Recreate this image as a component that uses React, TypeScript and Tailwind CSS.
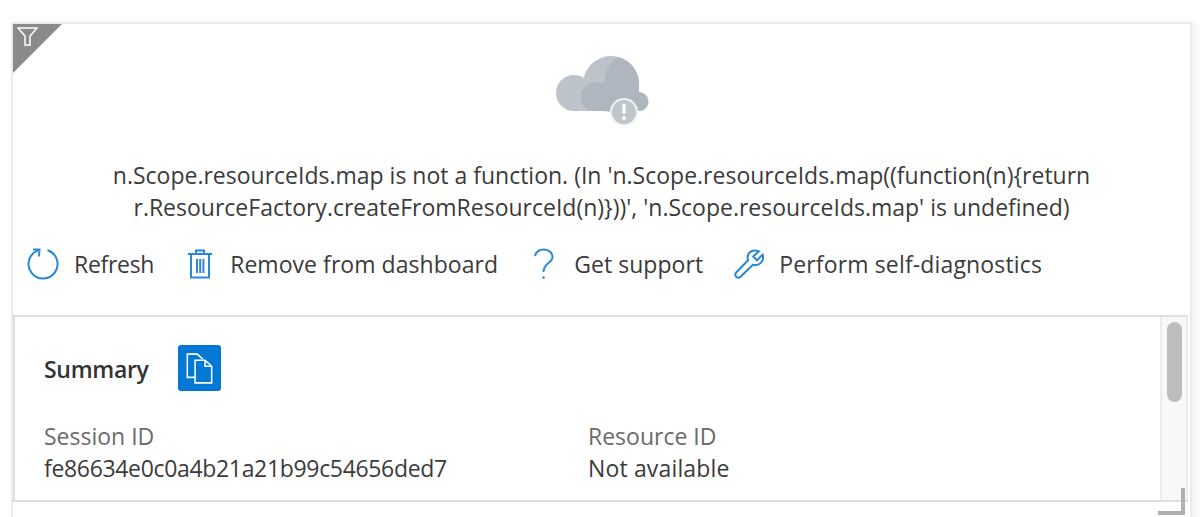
import React from "react";

const CloudIcon = () => (
  <svg width="96" height="72" viewBox="0 0 96 72" fill="none">
    <circle cx="18" cy="39" r="18" fill="#bcc3cb" />
    <circle cx="55" cy="30" r="28" fill="#bcc3cb" />
    <rect x="18" y="38" width="67" height="19" fill="#bcc3cb" />
    <path d="M40 57C31 57 25 51 25 43C25 34 33 28 41 28C44 28 46 28.500 48 29.500C48 20 52 9 62 3A28 28 0 0 1 83 31V38.200A9.500 9.500 0 0 1 85 57Z" fill="#aeb6bf" />
    <circle cx="68" cy="58" r="13" fill="#bfc5cc" stroke="#eef0f2" strokeWidth="2" />
    <rect x="66.300" y="50" width="3.400" height="10" rx="1.500" fill="#ffffff" />
    <circle cx="68" cy="64" r="2" fill="#ffffff" />
  </svg>
);

const RefreshIcon = () => (
  <svg width="32" height="32" viewBox="0 0 32 32" fill="none" stroke="#2b88d8" strokeWidth="2">
    <path d="M20.500 2.200A14.500 14.500 0 1 1 11 2.400" />
    <path d="M6 1.500H12.500L12 8.500" />
  </svg>
);

const TrashIcon = () => (
  <svg width="26" height="32" viewBox="0 0 26 32" fill="none" stroke="#2b88d8" strokeWidth="2">
    <path d="M1 6H25M9 6V2.500H17V6M4 6V29.500H22V6M10 11V25M13.200 11V25M16.400 11V25" />
  </svg>
);

const HelpIcon = () => (
  <svg width="22" height="32" viewBox="0 0 22 32" fill="none" stroke="#2b88d8" strokeWidth="2">
    <path d="M3 8C4 4 7 1.500 12 1.500C17 1.500 20.500 5 20.500 9C20.500 15 11.500 15 11.500 24" />
    <circle cx="11.500" cy="29.500" r="1.300" fill="#2b88d8" stroke="none" />
  </svg>
);

const WrenchIcon = () => (
  <svg width="31" height="30" viewBox="0 0 32 32" fill="none" stroke="#2b88d8" strokeWidth="2.200">
    <path d="M21.500 1.500C17 1.500 14 5 14 9C14 10 14.200 11 14.500 12L1.800 25C0.500 26.500 0.500 28 1.800 29.500C3.300 31 5 31 6.500 29.500L19.500 16.800C20.500 17 21 17.200 22 17.200C27 17.200 30.500 13.500 30.500 9C30.500 8 30.300 7 30 6L24 12L20 8L26 2.500C24.500 1.800 23 1.500 21.500 1.500Z" />
  </svg>
);

const CopyIcon = () => (
  <svg width="27" height="31" viewBox="0 0 24 28" fill="none" stroke="#ffffff" strokeWidth="1.400">
    <path d="M8 22H1V1H10L15 5.500" />
    <path d="M8 6.500H17L23 12V27H8Z" fill="#0078d4" />
    <path d="M17 6.500V12H23" />
  </svg>
);

const actions = [
  { label: "Refresh", icon: <RefreshIcon />, item: "ml-[14px] gap-[15px]", box: "w-[32px]", text: "tracking-[-0.3px]" },
  { label: "Remove from dashboard", icon: <TrashIcon />, item: "ml-[32px] gap-[16px]", box: "w-[28px]", text: "tracking-[0.05px]" },
  { label: "Get support", icon: <HelpIcon />, item: "ml-[32px] gap-[18px]", box: "w-[26px]", text: "tracking-[0.05px]" },
  { label: "Perform self-diagnostics", icon: <WrenchIcon />, item: "ml-[30px] gap-[14px]", box: "w-[32px]", text: "tracking-[0.15px]" },
];

export default function App() {
  return (
    <div className="h-[517px] overflow-hidden bg-white pt-[22px] pl-[11px] pr-[8px] font-['Open_Sans','Noto_Sans',sans-serif] text-[#3b3b3b]">
      <div className="relative h-[520px] border-x-2 border-t-2 border-[#ebebeb] bg-white shadow-[5px_0_6px_rgba(0,0,0,0.05)]">
        {/* Filter corner */}
        <div className="absolute left-0 top-0 h-0 w-0 border-t-[49px] border-r-[49px] border-t-[#8a8a8a] border-r-transparent" />
        <svg className="absolute left-[4px] top-[3px]" width="21" height="20" viewBox="0 0 21 20" fill="none" stroke="#ffffff" strokeWidth="1.500">
          <path d="M1 1H20L13 9V18H8V9Z" />
        </svg>

        <div className="flex justify-center pt-[30px] pl-[4px]">
          <CloudIcon />
        </div>

        <p className="mt-[33px] text-center text-[23px] leading-[32px]">
          n.Scope.resourceIds.map is not a function. (In 'n.Scope.resourceIds.map((function(n){"{"}return
          <br />
          r.ResourceFactory.createFromResourceId(n){"}"}))', 'n.Scope.resourceIds.map' is undefined)
        </p>

        <div className="mt-[25px] flex items-center">
          {actions.map((a) => (
            <div key={a.label} className={`flex items-center ${a.item}`}>
              <span className={`flex justify-center ${a.box}`}>{a.icon}</span>
              <span className={`text-[23px] leading-[32px] whitespace-nowrap ${a.text}`}>{a.label}</span>
            </div>
          ))}
        </div>

        <div className="mt-[35px] mr-[2px] flex h-[187px] border-y-2 border-l-2 border-[#dedede]">
          <div className="flex-1 pl-[29px] pt-[28px]">
            <div className="flex items-center gap-[29px]">
              <h2 className="mt-[3px] text-[23px] font-semibold tracking-[-0.3px] text-[#333333]">Summary</h2>
              <div className="flex h-[46px] w-[43px] items-center justify-center rounded-[3px] bg-[#0078d4]">
                <CopyIcon />
              </div>
            </div>
            <div className="mt-[29px] grid grid-cols-[544px_1fr] text-[23px] leading-[32px]">
              <div>
                <div className="text-[#6b6b6b]">Session ID</div>
                <div className="tracking-[-0.33px]">fe86634e0c0a4b21a21b99c54656ded7</div>
              </div>
              <div>
                <div className="text-[#6b6b6b]">Resource ID</div>
                <div className="tracking-[0.15px]">Not available</div>
              </div>
            </div>
          </div>
          <div className="w-[28px] border-x-2 border-[#ececec] bg-[#f8f8f8] pt-[5px]">
            <div className="mx-auto h-[80px] w-[15px] rounded-full bg-[#bdbdbd]" />
          </div>
        </div>

        {/* Resize handle */}
        <div className="absolute left-[1145px] top-[464px] h-[27px] w-[27px] border-r-4 border-b-4 border-r-[#b0b0b0] border-b-[#b0b0b0]" />
      </div>
    </div>
  );
}
